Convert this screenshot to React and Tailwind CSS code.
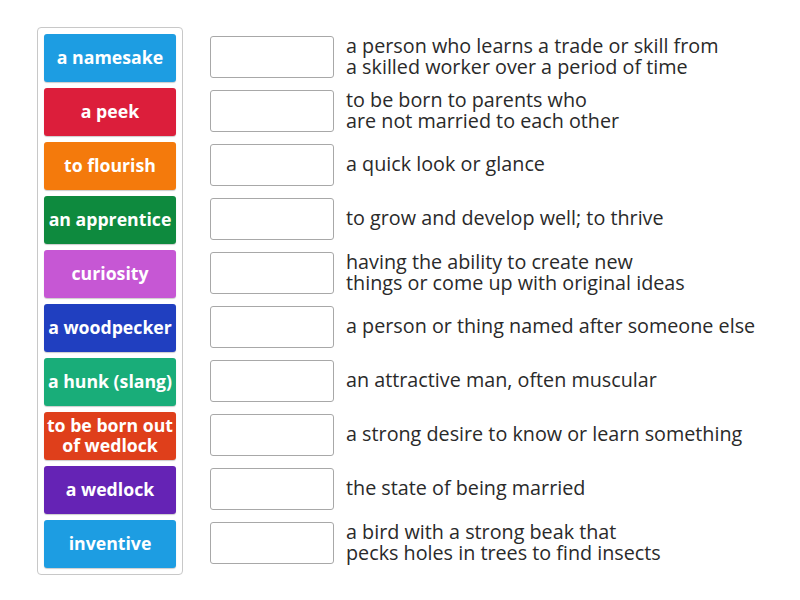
import React from 'react';

const tiles = [
  { label: 'a namesake', color: 'bg-[#1d9de2]' },
  { label: 'a peek', color: 'bg-[#dc1e3b]' },
  { label: 'to flourish', color: 'bg-[#f47a0c]' },
  { label: 'an apprentice', color: 'bg-[#0e8a3e]' },
  { label: 'curiosity', color: 'bg-[#c657d4]' },
  { label: 'a woodpecker', color: 'bg-[#203fc0]' },
  { label: 'a hunk (slang)', color: 'bg-[#19ad79]' },
  { label: 'to be born out of wedlock', color: 'bg-[#df3f1b]' },
  { label: 'a wedlock', color: 'bg-[#6523b5]' },
  { label: 'inventive', color: 'bg-[#1d9de2]' },
];

const definitions = [
  ['a person who learns a trade or skill from', 'a skilled worker over a period of time'],
  ['to be born to parents who', 'are not married to each other'],
  ['a quick look or glance'],
  ['to grow and develop well; to thrive'],
  ['having the ability to create new', 'things or come up with original ideas'],
  ['a person or thing named after someone else'],
  ['an attractive man, often muscular'],
  ['a strong desire to know or learn something'],
  ['the state of being married'],
  ['a bird with a strong beak that', 'pecks holes in trees to find insects'],
];

export default function App() {
  return (
    <div className="w-[800px] h-[600px] bg-white font-['Open_Sans',sans-serif] relative">
      <div className="flex pt-[27px] pl-[37px]">
        {/* Tile bank */}
        <div className="w-[146px] border border-[#c8c8c8] rounded-[4px] p-[6px] flex flex-col gap-[6px]">
          {tiles.map((t) => (
            <div
              key={t.label}
              className={`${t.color} h-[48px] rounded-[3px] flex items-center justify-center text-center text-white font-bold text-[17.7px] leading-[20px] pb-[3px] shadow-[0_1px_1px_rgba(0,0,0,0.2)]`}
            >
              {t.label}
            </div>
          ))}
        </div>

        {/* Answer rows */}
        <div className="ml-[27px] pt-[9px] flex flex-col gap-[12px]">
          {definitions.map((lines, i) => (
            <div key={i} className="flex items-center h-[42px]">
              <div className="w-[124px] h-[42px] border border-[#a8a8a8] rounded-[3px] bg-white shrink-0" />
              <div className="ml-[12px] text-[19.75px] leading-[21px] text-[#2a2a2a] whitespace-nowrap pb-[3px]">
                {lines.map((l, j) => (
                  <div key={j}>{l}</div>
                ))}
              </div>
            </div>
          ))}
        </div>
      </div>
    </div>
  );
}
